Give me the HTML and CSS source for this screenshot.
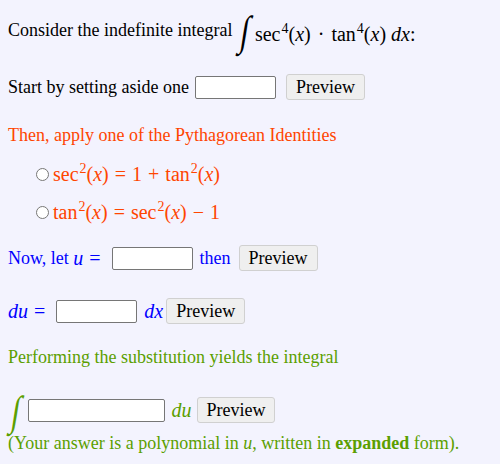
FILE: index.html
```html
<!DOCTYPE html>
<html>
<head>
    <title>Trig Substitution</title>
    <link rel="stylesheet" href="styles.css">
</head>
<body>
    <div class="problem">
        <p class="row intro"><span>Consider the indefinite integral</span><span class="math"><span class="int">&int;</span>sec<sup>4</sup>(<i>x</i>)<span class="op">&middot;</span>tan<sup>4</sup>(<i>x</i>) <i>dx</i>:</span></p>

        <p class="row step-one"><span>Start by setting aside one</span><input type="text" class="answer"><button class="preview">Preview</button></p>

        <div class="identities">
            <p class="row lead">Then, apply one of the Pythagorean Identities</p>
            <label class="row choice first"><input type="radio" name="ident"><span class="math">sec<sup>2</sup>(<i>x</i>)<span class="rel">=</span>1<span class="rel">+</span>tan<sup>2</sup>(<i>x</i>)</span></label>
            <label class="row choice"><input type="radio" name="ident"><span class="math">tan<sup>2</sup>(<i>x</i>)<span class="rel">=</span>sec<sup>2</sup>(<i>x</i>)<span class="rel">&minus;</span>1</span></label>
        </div>

        <div class="sub">
            <p class="row let-row"><span>Now, let&nbsp;</span><span class="math"><i>u</i><span class="rel">=</span></span><input type="text" class="answer"><span class="then">then</span><button class="preview">Preview</button></p>
            <p class="row du-row"><span class="math"><i>du</i><span class="rel">=</span></span><input type="text" class="answer"><span class="math dx"><i>dx</i></span><button class="preview">Preview</button></p>
        </div>

        <div class="result">
            <p class="row lead">Performing the substitution yields the integral</p>
            <p class="row int-row"><span class="int">&int;</span><input type="text" class="answer wide"><span class="math du"><i>du</i></span><button class="preview">Preview</button></p>
            <p class="note">(Your answer is a polynomial in <i class="var">u</i>, written in <b>expanded</b> form).</p>
        </div>
    </div>
</body>
</html>
```

FILE: styles.css
```css
body {
    margin: 0;
    padding: 0;
    background: #f3f3fe;
    font-family: "Liberation Serif", "Times New Roman", serif;
    font-size: 18px;
    color: #000;
}

.problem {
    padding: 8px;
}

p {
    margin: 0;
}

.row {
    display: flex;
    align-items: center;
    height: 28px;
    white-space: nowrap;
}

.intro {
    height: 44px;
}

.math {
    font-family: "Liberation Serif", "Times New Roman", serif;
    font-size: 20px;
    white-space: nowrap;
}

.math i, .var {
    font-style: italic;
}

.math sup {
    font-size: 14px;
    vertical-align: 8px;
    line-height: 0;
    margin-left: 1px;
}

.op {
    margin: 0 7px;
}

.rel {
    margin: 0 6px;
}

.int {
    display: inline-block;
    font-size: 31px;
    transform: scaleY(1.35) skewX(-12deg);
    margin: 0 5px 0 9px;
    line-height: 1;
}

.step-one {
    margin-top: 21px;
}

.answer {
    width: 79px;
    height: 21px;
    padding: 0;
    border: 1px solid #767676;
    border-radius: 2px;
    background: #fff;
    box-sizing: content-box;
    margin: 0 0 0 6px;
}

.answer.wide {
    width: 135px;
    margin-left: 0;
}

.preview {
    font-family: "Liberation Serif", "Times New Roman", serif;
    font-size: 18px;
    padding: 0 9px;
    height: 26px;
    background: #efefef;
    border: 1px solid #d0d0d0;
    border-radius: 3px;
    color: #000;
    margin-left: 10px;
}

.identities {
    color: #ff4500;
    margin-top: 22px;
}

.lead {
    height: 24px;
}

.choice {
    height: 30px;
    margin-left: 28px;
    margin-top: 8px;
}

.choice.first {
    margin-top: 12px;
}

.choice input {
    width: 13px;
    height: 13px;
    margin: 0 4px 0 0;
}

.sub {
    color: #0000ff;
    margin-top: 17px;
}

.let-row .answer {
    margin-left: 5px;
}

.then {
    margin-left: 7px;
}

.let-row .preview {
    margin-left: 8px;
}

.du-row {
    margin-top: 25px;
}

.du-row .answer {
    margin-left: 5px;
}

.dx {
    margin-left: 7px;
}

.du-row .preview {
    margin-left: 3px;
}

.result {
    color: #5b9f00;
    margin-top: 20px;
}

.int-row {
    margin-top: 19px;
    height: 44px;
}

.int-row .int {
    margin: 0 7px 0 4px;
}

.du {
    margin-left: 7px;
}

.int-row .preview {
    margin-left: 5px;
}

.note {
    height: 22px;
    line-height: 22px;
    white-space: nowrap;
}

.note b {
    font-weight: bold;
}
```
